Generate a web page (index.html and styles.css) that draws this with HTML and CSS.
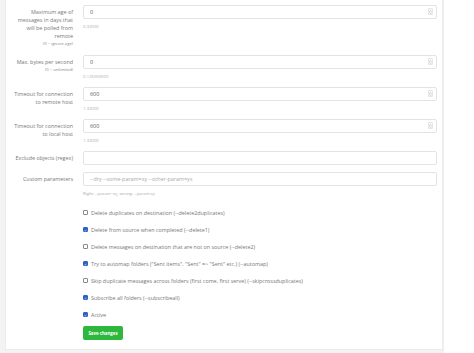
FILE: index.html
```html
<!DOCTYPE html>
<html lang="en">
<head>
    <meta charset="UTF-8">
    <meta name="viewport" content="width=device-width, initial-scale=1.0">
    <title>Sync Settings</title>
    <link rel="stylesheet" href="styles.css">
</head>
<body>
    <div id="page">
        <div id="card">
            <div class="form-group">
                <label class="col-label">Maximum age of messages in days that will be polled from remote<small>(0 = ignore age)</small></label>
                <div class="col-field">
                    <div class="input-wrap">
                        <input type="text" value="0">
                        <span class="spinner"><svg width="4" height="6" viewBox="0 0 4 6"><path d="M0.6 2.3 L2 0.9 L3.4 2.3 M0.6 3.7 L2 5.1 L3.4 3.7" fill="none" stroke="#999" stroke-width="0.7"/></svg></span>
                    </div>
                    <div class="help">0-32000</div>
                </div>
            </div>

            <div class="form-group">
                <label class="col-label">Max. bytes per second<small>(0 = unlimited)</small></label>
                <div class="col-field">
                    <div class="input-wrap">
                        <input type="text" value="0">
                        <span class="spinner"><svg width="4" height="6" viewBox="0 0 4 6"><path d="M0.6 2.3 L2 0.9 L3.4 2.3 M0.6 3.7 L2 5.1 L3.4 3.7" fill="none" stroke="#999" stroke-width="0.7"/></svg></span>
                    </div>
                    <div class="help">0-125000000</div>
                </div>
            </div>

            <div class="form-group">
                <label class="col-label">Timeout for connection to remote host</label>
                <div class="col-field">
                    <div class="input-wrap">
                        <input type="text" value="600">
                        <span class="spinner"><svg width="4" height="6" viewBox="0 0 4 6"><path d="M0.6 2.3 L2 0.9 L3.4 2.3 M0.6 3.7 L2 5.1 L3.4 3.7" fill="none" stroke="#999" stroke-width="0.7"/></svg></span>
                    </div>
                    <div class="help">1-32000</div>
                </div>
            </div>

            <div class="form-group">
                <label class="col-label">Timeout for connection to local host</label>
                <div class="col-field">
                    <div class="input-wrap">
                        <input type="text" value="600">
                        <span class="spinner"><svg width="4" height="6" viewBox="0 0 4 6"><path d="M0.6 2.3 L2 0.9 L3.4 2.3 M0.6 3.7 L2 5.1 L3.4 3.7" fill="none" stroke="#999" stroke-width="0.7"/></svg></span>
                    </div>
                    <div class="help">1-32000</div>
                </div>
            </div>

            <div class="form-group">
                <label class="col-label">Exclude objects (regex)</label>
                <div class="col-field">
                    <div class="input-wrap">
                        <input type="text" value="">
                    </div>
                </div>
            </div>

            <div class="form-group">
                <label class="col-label">Custom parameters</label>
                <div class="col-field">
                    <div class="input-wrap">
                        <input type="text" placeholder="--dry --some-param=xy --other-param=yx">
                    </div>
                    <div class="help">Right: --param=xy, wrong: --param xy</div>
                </div>
            </div>

            <div class="checks">
                <div class="check"><span class="box"></span>Delete duplicates on destination (--delete2duplicates)</div>
                <div class="check"><span class="box checked"><svg width="5" height="5" viewBox="0 0 5 5"><path d="M1 2.6 L2.1 3.6 L4 1.3" fill="none" stroke="#fff" stroke-width="0.9"/></svg></span>Delete from source when completed (--delete1)</div>
                <div class="check"><span class="box"></span>Delete messages on destination that are not on source (--delete2)</div>
                <div class="check"><span class="box checked"><svg width="5" height="5" viewBox="0 0 5 5"><path d="M1 2.6 L2.1 3.6 L4 1.3" fill="none" stroke="#fff" stroke-width="0.9"/></svg></span>Try to automap folders ("Sent items", "Sent" =&gt; "Sent" etc.) (--automap)</div>
                <div class="check"><span class="box"></span>Skip duplicate messages across folders (first come, first serve) (--skipcrossduplicates)</div>
                <div class="check"><span class="box checked"><svg width="5" height="5" viewBox="0 0 5 5"><path d="M1 2.6 L2.1 3.6 L4 1.3" fill="none" stroke="#fff" stroke-width="0.9"/></svg></span>Subscribe all folders (--subscribeall)</div>
                <div class="check"><span class="box checked"><svg width="5" height="5" viewBox="0 0 5 5"><path d="M1 2.6 L2.1 3.6 L4 1.3" fill="none" stroke="#fff" stroke-width="0.9"/></svg></span>Active</div>
                <button class="btn-save">Save changes</button>
            </div>
        </div>
    </div>
</body>
</html>
```

FILE: styles.css
```css
body {
    margin: 0;
    padding: 0;
    background: #fff;
    font-family: 'Open Sans', sans-serif;
    color: #777;
}

#page {
    width: 443px;
    height: 353px;
    background: #f3f3f3;
    border-right: 1px solid #f0f0f0;
}

#card {
    margin-left: 5px;
    width: 438px;
    height: 350px;
    box-sizing: border-box;
    background: #fff;
    border: 1px solid #ececec;
    border-top: none;
    padding: 5px 5px 0 6px;
}

.form-group {
    display: flex;
    gap: 10px;
    margin-bottom: 7px;
}

.col-label {
    width: 61px;
    flex-shrink: 0;
    text-align: right;
    font-size: 5.4px;
    line-height: 8px;
    padding-top: 3px;
    color: #777;
}

.col-label small {
    display: block;
    font-size: 4.2px;
    line-height: 8px;
    color: #888;
}

.col-field {
    flex: 1;
}

.input-wrap {
    position: relative;
}

input {
    display: block;
    width: 100%;
    height: 14px;
    box-sizing: border-box;
    border: 1px solid #e3e3e3;
    border-radius: 2px;
    padding: 0 6px;
    font-family: 'Open Sans', sans-serif;
    font-size: 5.4px;
    color: #555;
    outline: none;
}

input::placeholder {
    color: #aaa;
}

.spinner {
    position: absolute;
    right: 4px;
    top: 3px;
    width: 5px;
    height: 7px;
    border: 1px solid #e6e6e6;
    border-radius: 1px;
    box-sizing: border-box;
    display: flex;
    align-items: center;
    justify-content: center;
    background: #fafafa;
}

.spinner svg {
    display: block;
}

.help {
    margin-top: 4px;
    font-size: 4.2px;
    line-height: 7px;
    color: #aaa;
}

.checks {
    margin-left: 71px;
}

.check {
    display: flex;
    align-items: center;
    height: 17px;
    font-size: 5.4px;
    color: #777;
    white-space: nowrap;
}

.box {
    width: 5px;
    height: 5px;
    box-sizing: border-box;
    border: 0.7px solid #888;
    border-radius: 1px;
    margin-right: 3px;
    background: #fff;
    display: flex;
}

.box.checked {
    background: #2b62c8;
    border-color: #2b62c8;
}

.box svg {
    display: block;
}

.btn-save {
    display: block;
    margin-top: 3px;
    background-color: #2db83d;
    color: #fff;
    border: none;
    border-radius: 2px;
    height: 14px;
    width: 40px;
    padding: 0;
    font-family: 'Open Sans', sans-serif;
    font-size: 4.4px;
    font-weight: bold;
    cursor: pointer;
}
```
